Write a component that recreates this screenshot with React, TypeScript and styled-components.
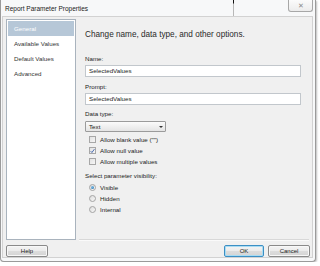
import React, { useState } from 'react';
import styled, { createGlobalStyle } from 'styled-components';

const GlobalStyle = createGlobalStyle`
    html, body {
        margin: 0;
        padding: 0;
        background: #ffffff;
    }
    body {
        font-family: "Liberation Sans", Arial, sans-serif;
        color: #1e1e1e;
    }
`;

const Window = styled.div`
    position: relative;
    display: flex;
    flex-direction: column;
    box-sizing: border-box;
    width: 316px;
    height: 262px;
    background: #f7f8f9;
    border: 1px solid #9a9a9a;
    border-top: none;
    border-radius: 0 0 4px 4px;
    box-shadow: 1px 1px 2px rgba(0, 0, 0, 0.25);
`;

const TitleBar = styled.div`
    position: relative;
    display: flex;
    align-items: flex-start;
    justify-content: space-between;
    height: 16px;
    padding-left: 4px;
`;

const Title = styled.span`
    font-size: 6.5px;
    line-height: 18px;
    color: #222;
`;

const StrayLine = styled.span`
    position: absolute;
    left: 232px;
    top: 0;
    width: 1px;
    height: 16px;
    background: linear-gradient(#111 0, #111 3px, #b8b8b8 4px);
`;

const CloseButton = styled.button`
    box-sizing: border-box;
    width: 25px;
    height: 12px;
    margin-right: 2px;
    padding: 0;
    border: 1px solid #a7a7a7;
    border-top: none;
    border-radius: 0 0 3px 3px;
    background: linear-gradient(#fbfbfb, #ececec);
    font-family: "Liberation Sans", Arial, sans-serif;
    font-size: 7px;
    line-height: 10px;
    color: #8a8a8a;
`;

const Client = styled.div`
    display: flex;
    flex-direction: column;
    flex: 1;
    margin: 0 2px 3px 1px;
    background: #f0f0f0;
    border: 1px solid #d2d2d2;
`;

const Body = styled.div`
    display: flex;
    gap: 3px;
    height: 221px;
    padding: 2px 3px 0 3px;
`;

const Nav = styled.ul`
    box-sizing: border-box;
    width: 70px;
    height: 221px;
    margin: 0;
    padding: 1px;
    list-style: none;
    background: #ffffff;
    border: 1px solid #a9b3bd;
`;

const NavItem = styled.li<{ $active?: boolean }>`
    height: 15px;
    padding-left: 6px;
    font-size: 6.2px;
    line-height: 15px;
    color: ${(p) => (p.$active ? '#ffffff' : '#333333')};
    background: ${(p) => (p.$active ? '#b6c7d7' : 'transparent')};
`;

const Content = styled.div`
    display: flex;
    flex-direction: column;
    flex: 1;
    box-sizing: border-box;
    height: 221px;
    padding: 10px 8px 0 6px;
    border-bottom: 1px solid #d8d8d8;
    box-shadow: 0 1px 0 #fafafa;
`;

const Heading = styled.div`
    font-size: 8.2px;
    line-height: 12px;
    color: #2a2a2a;
`;

const Label = styled.div<{ $gap: number }>`
    margin-top: ${(p) => p.$gap}px;
    font-size: 6.2px;
    line-height: 9px;
    color: #222;
`;

const TextBox = styled.div`
    box-sizing: border-box;
    height: 12px;
    margin-top: 2px;
    padding-left: 3px;
    background: #ffffff;
    border: 1px solid #c2c7cc;
    font-size: 6.2px;
    line-height: 10px;
    color: #222;
`;

const Select = styled.div`
    display: flex;
    align-items: center;
    justify-content: space-between;
    box-sizing: border-box;
    width: 81px;
    height: 11px;
    margin-top: 3px;
    padding: 0 2px 0 3px;
    background: linear-gradient(#fbfbfb, #e4e4e4);
    border: 1px solid #9b9b9b;
    border-radius: 1px;
    font-size: 6.2px;
    color: #222;
`;

const Arrow = styled.span`
    width: 0;
    height: 0;
    border-left: 2px solid transparent;
    border-right: 2px solid transparent;
    border-top: 2px solid #333;
`;

const OptionList = styled.div<{ $gap: number }>`
    display: flex;
    flex-direction: column;
    margin-top: ${(p) => p.$gap}px;
`;

const OptionRow = styled.label`
    display: flex;
    align-items: center;
    gap: 4px;
    height: 11px;
    padding-left: 4px;
    font-size: 6.2px;
    color: #222;
`;

const Box = styled.span<{ $checked?: boolean }>`
    display: flex;
    align-items: center;
    justify-content: center;
    box-sizing: border-box;
    width: 7px;
    height: 7px;
    background: linear-gradient(135deg, #e2e2e2, #f6f6f6);
    border: 1px solid #a7a7a7;
`;

const Radio = styled.span<{ $checked?: boolean }>`
    display: flex;
    align-items: center;
    justify-content: center;
    box-sizing: border-box;
    width: 7px;
    height: 7px;
    border-radius: 50%;
    background: linear-gradient(135deg, #dcdcdc, #f8f8f8);
    border: 1px solid #a3a3a3;

    &::after {
        content: '';
        display: ${(p) => (p.$checked ? 'block' : 'none')};
        width: 3px;
        height: 3px;
        border-radius: 50%;
        background: radial-gradient(circle at 35% 35%, #7fc0ec, #1f6ea8);
    }
`;

const Footer = styled.div`
    display: flex;
    align-items: flex-start;
    padding: 5px 2px 0 3px;
`;

const Button = styled.button<{ $default?: boolean }>`
    box-sizing: border-box;
    width: ${(p) => (p.$default ? '40px' : '42px')};
    height: 12px;
    margin-left: 4px;
    padding: 0;
    background: linear-gradient(#f4f4f4 0, #ebebeb 50%, #dddddd 51%, #d4d4d4 100%);
    border: 1px solid ${(p) => (p.$default ? '#3c8fc4' : '#8a8a8a')};
    border-radius: 2px;
    box-shadow: ${(p) => (p.$default ? 'inset 0 0 0 1px #a9dcf3' : 'inset 0 0 0 1px #f8f8f8')};
    font-family: "Liberation Sans", Arial, sans-serif;
    font-size: 6px;
    line-height: 10px;
    color: #222;

    &:first-child {
        margin-left: 0;
    }
`;

const Spacer = styled.div`
    flex: 1;
`;

const Check = () => (
    <svg width="6" height="6" viewBox="0 0 6 6">
        <path d="M0.8 3.2 L2.3 4.8 L5.3 0.8" fill="none" stroke="#3b5fa8" strokeWidth="1.1" />
    </svg>
);

const navItems = ['General', 'Available Values', 'Default Values', 'Advanced'];

export default function App() {
    const [active] = useState('General');

    return (
        <>
            <GlobalStyle />
            <Window>
                <TitleBar>
                    <Title>Report Parameter Properties</Title>
                    <StrayLine />
                    <CloseButton>✕</CloseButton>
                </TitleBar>
                <Client>
                    <Body>
                        <Nav>
                            {navItems.map((item) => (
                                <NavItem key={item} $active={item === active}>
                                    {item}
                                </NavItem>
                            ))}
                        </Nav>
                        <Content>
                            <Heading>Change name, data type, and other options.</Heading>

                            <Label $gap={13}>Name:</Label>
                            <TextBox>SelectedValues</TextBox>

                            <Label $gap={5}>Prompt:</Label>
                            <TextBox>SelectedValues</TextBox>

                            <Label $gap={4}>Data type:</Label>
                            <Select>
                                Text
                                <Arrow />
                            </Select>

                            <OptionList $gap={2}>
                                <OptionRow>
                                    <Box />
                                    Allow blank value ("")
                                </OptionRow>
                                <OptionRow>
                                    <Box $checked>
                                        <Check />
                                    </Box>
                                    Allow null value
                                </OptionRow>
                                <OptionRow>
                                    <Box />
                                    Allow multiple values
                                </OptionRow>
                            </OptionList>

                            <Label $gap={4}>Select parameter visibility:</Label>
                            <OptionList $gap={2}>
                                <OptionRow>
                                    <Radio $checked />
                                    Visible
                                </OptionRow>
                                <OptionRow>
                                    <Radio />
                                    Hidden
                                </OptionRow>
                                <OptionRow>
                                    <Radio />
                                    Internal
                                </OptionRow>
                            </OptionList>
                        </Content>
                    </Body>
                    <Footer>
                        <Button>Help</Button>
                        <Spacer />
                        <Button $default>OK</Button>
                        <Button>Cancel</Button>
                    </Footer>
                </Client>
            </Window>
        </>
    );
}
